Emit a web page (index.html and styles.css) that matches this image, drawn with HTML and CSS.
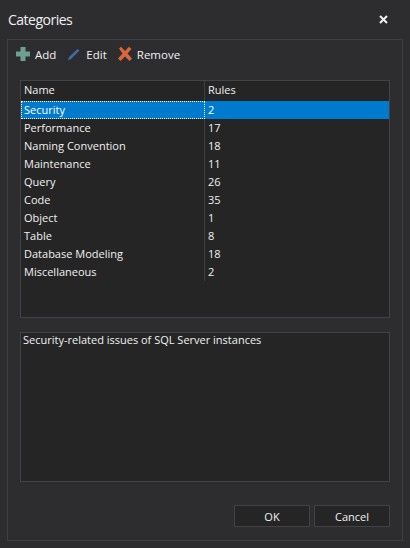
FILE: index.html
```html
<!DOCTYPE html>
<html lang="en">
<head>
<meta charset="utf-8">
<title>Categories</title>
<link rel="stylesheet" href="styles.css">
</head>
<body>
<div class="window">
  <header class="titlebar">
    <h1 class="title">Categories</h1>
    <svg class="close" viewBox="0 0 9 9" width="9" height="9"><path d="M1 1 8 8M8 1 1 8" stroke="#f1f1f1" stroke-width="2" fill="none"/></svg>
  </header>
  <main class="panel">
    <div class="toolbar">
      <button class="tool tool-add">
        <svg viewBox="0 0 16 16" width="16" height="16"><path d="M5.500 1h5v4.500H15v5h-4.500V15h-5v-4.500H1v-5h4.500z" fill="#6f9f8f"/></svg>
        <span>Add</span>
      </button>
      <button class="tool tool-edit">
        <svg viewBox="0 0 16 16" width="16" height="16"><path d="M2 14.500 3 11 11.500 3 13.500 4.500 5 13z" fill="#3c6ea5"/></svg>
        <span>Edit</span>
      </button>
      <button class="tool tool-remove">
        <svg viewBox="0 0 16 16" width="16" height="16"><path d="M2 2.500 4 .8 8 5 12 .8 14.500 3 10.500 7.500 15 12.500 12.500 15 8 10.500 3.500 15 1 12.500 5.500 7.500z" fill="#d9663c"/></svg>
        <span>Remove</span>
      </button>
    </div>
    <section class="list">
      <div class="row head"><div class="c1">Name</div><div class="c2">Rules</div></div>
      <div class="row selected"><div class="c1"><span class="focus">Security</span></div><div class="c2">2</div></div>
      <div class="row"><div class="c1">Performance</div><div class="c2">17</div></div>
      <div class="row"><div class="c1">Naming Convention</div><div class="c2">18</div></div>
      <div class="row"><div class="c1">Maintenance</div><div class="c2">11</div></div>
      <div class="row"><div class="c1">Query</div><div class="c2">26</div></div>
      <div class="row"><div class="c1">Code</div><div class="c2">35</div></div>
      <div class="row"><div class="c1">Object</div><div class="c2">1</div></div>
      <div class="row"><div class="c1">Table</div><div class="c2">8</div></div>
      <div class="row"><div class="c1">Database Modeling</div><div class="c2">18</div></div>
      <div class="row"><div class="c1">Miscellaneous</div><div class="c2">2</div></div>
    </section>
    <section class="details">Security-related issues of SQL Server instances</section>
    <div class="actions">
      <button class="btn">OK</button>
      <button class="btn">Cancel</button>
    </div>
  </main>
</div>
</body>
</html>
```

FILE: styles.css
```css
* { box-sizing: border-box; }
html, body { margin: 0; padding: 0; }
body {
  width: 410px;
  height: 548px;
  overflow: hidden;
  background: #2d2d30;
  font-family: "Open Sans", "Noto Sans", sans-serif;
  font-size: 11px;
  color: #f1f1f1;
}
.window { width: 410px; height: 548px; display: flex; flex-direction: column; padding: 0 7px 7px; }
.titlebar { height: 39px; display: flex; align-items: center; justify-content: space-between; padding: 0 15px 0 1px; }
.title { margin: 0; font-size: 14px; font-weight: 400; letter-spacing: -0.5px; color: #f1f1f1; }
.close { display: block; }
.panel { flex: 1; border: 1px solid #3f3f42; display: flex; flex-direction: column; padding: 0 12px 0 12px; }
.toolbar { display: flex; align-items: center; gap: 10px; margin: 4px 0 0 -5px; height: 20px; font-size: 11.5px; }
.tool { display: flex; align-items: center; gap: 4px; background: none; border: 0; padding: 0; color: #f1f1f1; font: inherit; }
.tool svg { display: block; }
.list { height: 238px; border: 1px solid #434346; background: #252526; margin-top: 16px; }
.row { display: flex; height: 18px; line-height: 18px; }
.row.head { height: 20px; line-height: 18px; background: #252526; }
.c1 { width: 184px; padding-left: 3px; border-right: 1px solid #3f3f42; }
.c2 { padding-left: 3px; }
.selected { background: #007acc; color: #fff; }
.selected .c1 { border-right: 0; outline: 1px dotted #fff; outline-offset: -1px; }
.details { height: 150px; margin-top: 14px; border: 1px solid #434346; background: #252526; padding: 0 2px; line-height: 13px; }
.actions { display: flex; justify-content: flex-end; gap: 4px; margin-top: 23px; }
.btn { width: 76px; height: 22px; background: #252526; border: 1px solid #434346; color: #f1f1f1; font: inherit; padding: 0; }
```
